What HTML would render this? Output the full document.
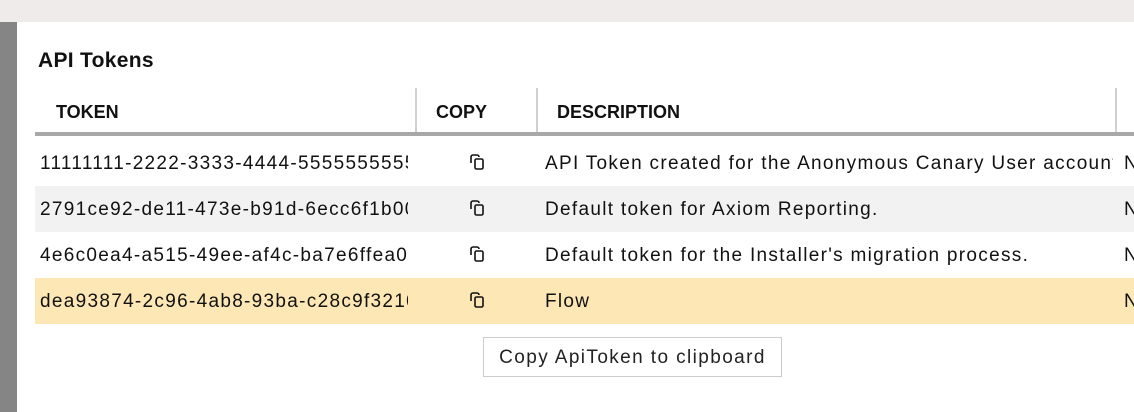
<!DOCTYPE html>
<html><head><meta charset="utf-8"><style>
*{margin:0;padding:0;box-sizing:border-box}
body{width:1134px;height:412px;overflow:hidden;background:#fff;font-family:"Liberation Sans",sans-serif;color:#111;position:relative}
.top{position:absolute;left:0;top:0;width:1134px;height:22px;background:#efebea}
.side{position:absolute;left:0;top:22px;width:17px;height:390px;background:#858585}
.title{position:absolute;left:38px;top:49px;font-size:21px;font-weight:bold;letter-spacing:0.3px}
.hd{position:absolute;top:102px;font-size:18px;font-weight:bold}
.sep{position:absolute;top:88px;width:2px;height:45px;background:#d0d0d0}
.line{position:absolute;left:35px;top:132px;width:1099px;height:4px;background:#a8a8a8}
.row{position:absolute;left:35px;width:1099px;height:46px;font-size:19px;letter-spacing:1.3px}
.row span{position:absolute;top:13px;white-space:nowrap;overflow:hidden}
.tok{left:5px;width:368px}
.desc{left:510px;width:568px}
.n{left:1089px}
.ic{position:absolute;left:434px;top:13px}
.btn{position:absolute;left:483px;top:337px;width:299px;height:40px;border:1px solid #ccc;font-size:19px;letter-spacing:1.4px;text-align:center;line-height:40px;color:#222}
</style></head><body>
<div class="top"></div><div class="side"></div>
<div class="title">API Tokens</div>
<div class="hd" style="left:56px">TOKEN</div>
<div class="hd" style="left:436px">COPY</div>
<div class="hd" style="left:557px">DESCRIPTION</div>
<div class="sep" style="left:415px"></div><div class="sep" style="left:536px"></div><div class="sep" style="left:1115px"></div>
<div class="line"></div>

<div class="row" style="top:140px;background:#fff"><span class="tok">11111111-2222-3333-4444-555555555555</span><svg class="ic" width="18" height="18" viewBox="0 0 18 18" fill="none" stroke="#111" stroke-width="1.6"><path d="M2 10V4a2 2 0 0 1 2-2h4a2 2 0 0 1 2 2"/><rect x="6" y="6" width="8" height="10" rx="1.5"/></svg><span class="desc">API Token created for the Anonymous Canary User account</span><span class="n">N</span></div>
<div class="row" style="top:186px;background:#f2f2f2"><span class="tok">2791ce92-de11-473e-b91d-6ecc6f1b0000</span><svg class="ic" width="18" height="18" viewBox="0 0 18 18" fill="none" stroke="#111" stroke-width="1.6"><path d="M2 10V4a2 2 0 0 1 2-2h4a2 2 0 0 1 2 2"/><rect x="6" y="6" width="8" height="10" rx="1.5"/></svg><span class="desc">Default token for Axiom Reporting.</span><span class="n">N</span></div>
<div class="row" style="top:232px;background:#fff"><span class="tok">4e6c0ea4-a515-49ee-af4c-ba7e6ffea000</span><svg class="ic" width="18" height="18" viewBox="0 0 18 18" fill="none" stroke="#111" stroke-width="1.6"><path d="M2 10V4a2 2 0 0 1 2-2h4a2 2 0 0 1 2 2"/><rect x="6" y="6" width="8" height="10" rx="1.5"/></svg><span class="desc">Default token for the Installer's migration process.</span><span class="n">N</span></div>
<div class="row" style="top:278px;background:#fde8b5"><span class="tok">dea93874-2c96-4ab8-93ba-c28c9f321000</span><svg class="ic" width="18" height="18" viewBox="0 0 18 18" fill="none" stroke="#111" stroke-width="1.6"><path d="M2 10V4a2 2 0 0 1 2-2h4a2 2 0 0 1 2 2"/><rect x="6" y="6" width="8" height="10" rx="1.5"/></svg><span class="desc">Flow</span><span class="n">N</span></div>

<div class="btn">Copy ApiToken to clipboard</div>
</body></html>
